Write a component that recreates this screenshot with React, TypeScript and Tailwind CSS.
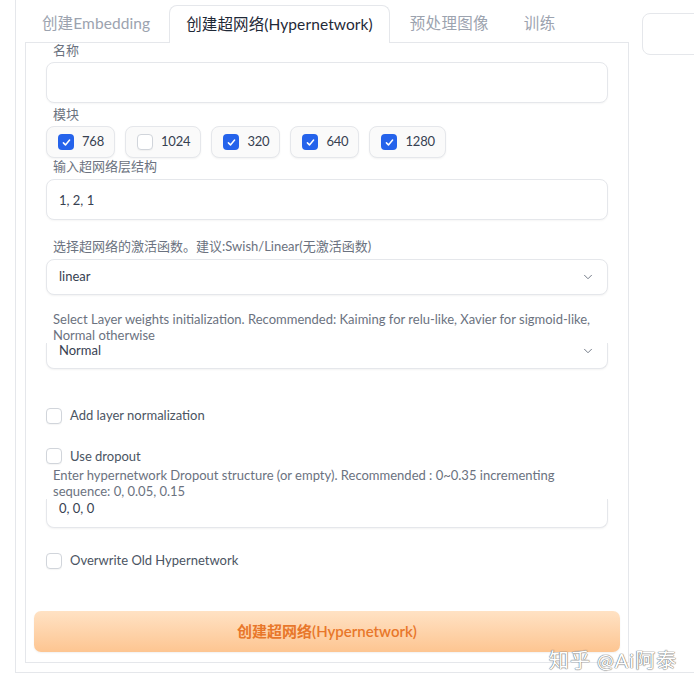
import React from "react";
import { ChevronDown } from "lucide-react";

const font = "font-['Lato','Noto_Sans_CJK_SC',sans-serif]";

function Box({ checked }: { checked: boolean }) {
  if (checked) {
    return (
      <span className="flex h-[16px] w-[16px] shrink-0 items-center justify-center rounded-[4px] bg-[#2563eb]">
        <svg width="11" height="11" viewBox="0 0 16 16" fill="none">
          <path d="M3.5 8.5l3 3 6-7" stroke="white" strokeWidth="2.2" strokeLinecap="round" strokeLinejoin="round" />
        </svg>
      </span>
    );
  }
  return <span className="h-[16px] w-[16px] shrink-0 rounded-[4px] border border-[#d1d5db] bg-white shadow-[0_1px_1px_rgba(0,0,0,0.04)]" />;
}

function Chip({ label, checked }: { label: string; checked: boolean }) {
  return (
    <div className="flex h-[32px] items-center gap-[8px] rounded-[8px] border border-[#e5e7eb] bg-[#fafafa] pl-[11px] pr-[10px] shadow-[0_1px_2px_rgba(0,0,0,0.05)]">
      <Box checked={checked} />
      <span className="text-[13px] tracking-[-0.2px] text-[#374151]">{label}</span>
    </div>
  );
}

function Label({ children, className = "" }: { children: React.ReactNode; className?: string }) {
  return <div className={`pl-[7px] text-[13px] leading-[16px] text-[#6b7280] ${className}`}>{children}</div>;
}

function CheckRow({ label, className = "" }: { label: string; className?: string }) {
  return (
    <div className={`flex items-center gap-[8px] ${className}`}>
      <Box checked={false} />
      <span className="text-[13px] text-[#4b5563]">{label}</span>
    </div>
  );
}

export default function App() {
  return (
    <div className={`relative h-[687px] w-[694px] overflow-hidden bg-white ${font}`}>
      <div className="ml-[15px] mt-[-20px] flex h-[693px] w-[720px] border border-[#e5e7eb] pl-[9px]">
        {/* left column */}
        <div className="mt-[24px] flex w-[604px] flex-col">
          {/* tabs */}
          <div className="relative z-10 flex h-[37px] items-end gap-[2px]">
            <div className="flex h-[37px] items-center pl-[17px] pr-[17px] text-[15.5px] tracking-[0.1px] text-[#9ca3af]">创建Embedding</div>
            <div className="mb-[-1px] flex h-[38px] items-center rounded-t-[8px] border border-b-0 border-[#e5e7eb] bg-white pl-[16px] pr-[16px] text-[15.5px] tracking-[0.1px] text-[#1f2937]">
              创建超网络(Hypernetwork)
            </div>
            <div className="flex h-[37px] items-center pl-[18px] pr-[17px] text-[15.5px] tracking-[0.3px] text-[#9ca3af]">预处理图像</div>
            <div className="flex h-[37px] items-center pl-[16px] pr-[17px] text-[15.5px] tracking-[0.5px] text-[#9ca3af]">训练</div>
          </div>
          {/* panel */}
          <div className="flex h-[621px] flex-col border border-[#e5e7eb] px-[8px]">
            <div className="flex flex-col px-[12px]">
              <Label className="mt-[-1px]">名称</Label>
              <div className="mt-[4px] h-[41px] rounded-[8px] border border-[#e5e7eb] bg-white shadow-[0_1px_2px_rgba(0,0,0,0.04)]" />
              <Label className="mt-[3px]">模块</Label>
              <div className="mt-[4px] flex gap-[10px]">
                <Chip label="768" checked />
                <Chip label="1024" checked={false} />
                <Chip label="320" checked />
                <Chip label="640" checked />
                <Chip label="1280" checked />
              </div>
              <Label className="mt-0">输入超网络层结构</Label>
              <div className="mt-[5px] flex h-[41px] items-center rounded-[8px] border border-[#e5e7eb] bg-white pl-[12px] pt-[2px] text-[13px] text-[#374151] shadow-[0_1px_2px_rgba(0,0,0,0.04)]">
                1, 2, 1
              </div>
              <Label className="mt-[18px]">选择超网络的激活函数。建议:Swish/Linear(无激活函数)</Label>
              <div className="mt-[5px] flex h-[36px] items-center justify-between rounded-[8px] border border-[#e5e7eb] bg-white pl-[12px] pr-[12px] text-[13px] text-[#374151] shadow-[0_1px_2px_rgba(0,0,0,0.05)]">
                <span>linear</span>
                <ChevronDown size={14} strokeWidth={1.6} color="#6b7280" />
              </div>
              <Label className="mt-[16px]">
                Select Layer weights initialization. Recommended: Kaiming for relu-like, Xavier for sigmoid-like, Normal otherwise
              </Label>
              <div className="flex h-[26px] items-start justify-between rounded-b-[8px] border border-t-0 border-[#e5e7eb] bg-white pl-[12px] pr-[12px] text-[13px] leading-[14px] text-[#374151] shadow-[0_1px_2px_rgba(0,0,0,0.05)]">
                <span>Normal</span>
                <ChevronDown size={14} strokeWidth={1.6} color="#6b7280" className="mt-[1px]" />
              </div>
              <CheckRow label="Add layer normalization" className="mt-[37px]" />
              <CheckRow label="Use dropout" className="mt-[21px]" />
              <Label className="mt-[1px]">
                Enter hypernetwork Dropout structure (or empty). Recommended : 0~0.35 incrementing sequence: 0, 0.05, 0.15
              </Label>
              <div className="flex h-[29px] items-start rounded-b-[8px] border border-t-0 border-[#e5e7eb] bg-white pl-[12px] pt-[1px] text-[13px] leading-[16px] text-[#374151] shadow-[0_1px_2px_rgba(0,0,0,0.05)]">
                0, 0, 0
              </div>
              <CheckRow label="Overwrite Old Hypernetwork" className="mt-[23px]" />
            </div>
            <div className="mt-[40px] flex h-[41px] items-center justify-center rounded-[7px] bg-gradient-to-b from-[#ffe2c4] to-[#fdc591] text-[15px] font-semibold text-[#e8772a] shadow-[0_1px_2px_rgba(0,0,0,0.06)]">
              创建超网络(Hypernetwork)
            </div>
          </div>
        </div>
        {/* right column */}
        <div className="ml-[13px] mt-[32px] h-[42px] w-[80px] rounded-[8px] border border-[#e5e7eb] bg-white" />
      </div>
      <div className="absolute left-[549px] top-[645px] text-[20px] tracking-[1px] text-white [text-shadow:0_0_1px_#777,0_0_1px_#777,0_0_1px_#777]">
        知乎 @Ai阿泰
      </div>
    </div>
  );
}
